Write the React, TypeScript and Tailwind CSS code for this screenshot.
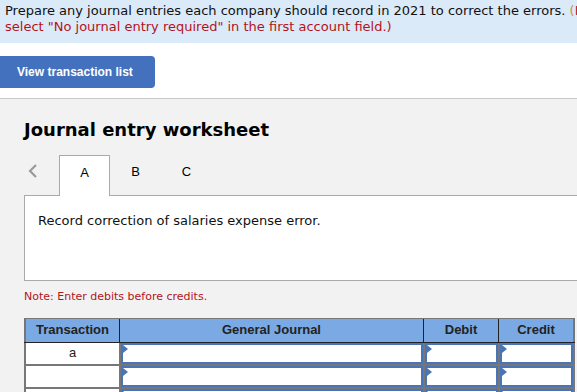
import React from "react";

function InputCell({ w }: { w: string }) {
  return (
    <div className={`relative h-full border-2 border-[#4a74b8] bg-white ${w}`}>
      <div className="absolute left-0 top-0 h-0 w-0 border-y-[4px] border-l-[5px] border-y-transparent border-l-[#4a74b8]" />
    </div>
  );
}

export default function App() {
  const verdana = { fontFamily: '"DejaVu Sans", Verdana, sans-serif' };
  const arial = { fontFamily: '"Liberation Sans", Arial, sans-serif' };
  const rows = ["a", "", ""];
  return (
    <div className="h-[392px] w-[577px] overflow-hidden bg-[#f2f2f2]">
      <div className="bg-white">
        <div
          className="h-[43px] overflow-hidden whitespace-nowrap bg-[#dbeaf8] px-[5px] pt-[3px] text-[13px] leading-[16px] text-[#111]"
          style={verdana}
        >
          <div>
            Prepare any journal entries each company should record in 2021 to correct the errors.{" "}
            <span className="text-[#e08a1e]">(</span>
            <span className="text-[#b5121b]">If no entry is required for a transaction/event,</span>
          </div>
          <div className="text-[#b5121b]">select "No journal entry required" in the first account field.)</div>
        </div>
        <div className="h-[55px] pt-[13px]">
          <div
            className="flex h-[32px] w-[155px] items-center rounded-r-[4px] bg-[#4371bd] pl-[17px] text-[12px] font-bold text-white"
            style={arial}
          >
            View transaction list
          </div>
        </div>
      </div>
      <div className="h-[1px] bg-[#c8c8c8]" />
      <div className="px-[24px]">
        <h1 className="mt-[20px] text-[18px] font-bold leading-[22px] text-black" style={verdana}>
          Journal entry worksheet
        </h1>
        <div className="mt-[14px] flex h-[40px] items-end" style={arial}>
          <div className="flex h-[40px] w-[35px] items-start pl-[3px] pt-[8px]">
            <svg width="12" height="16" viewBox="0 0 12 16">
              <path d="M9 2 L3 8 L9 14" fill="none" stroke="#9a9a9a" strokeWidth="2.2" />
            </svg>
          </div>
          <div className="relative z-10 -mb-px flex h-[41px] w-[51px] justify-center border border-b-0 border-[#aaa] bg-white pt-[7px] text-[13px] text-black">
            A
          </div>
          <div className="flex h-[40px] w-[51px] justify-center pt-[7px] text-[13px] text-black">B</div>
          <div className="flex h-[40px] w-[51px] justify-center pt-[7px] text-[13px] text-black">C</div>
        </div>
        <div className="-mr-[40px] h-[86px] border border-[#aaa] bg-white px-[13px] pt-[15px] text-[13px] text-[#111]" style={verdana}>
          Record correction of salaries expense error.
        </div>
        <div className="mt-[8px] text-[11px] text-[#b5121b]" style={verdana}>
          Note: Enter debits before credits.
        </div>
        <div className="mt-[12px] w-[551px]" style={arial}>
          <div className="flex h-[25px] border-b border-t border-b-[#222] border-t-[#777] bg-[#7ba9e3] text-[13px] font-bold text-[#222]">
            <div className="flex w-[96px] items-center justify-center border-l-2 border-r border-l-[#777] border-r-[#222]">Transaction</div>
            <div className="flex w-[304px] items-center justify-center border-r border-[#222]">General Journal</div>
            <div className="flex w-[75px] items-center justify-center border-r border-[#222]">Debit</div>
            <div className="flex w-[76px] items-center justify-center border-r-2 border-[#777]">Credit</div>
          </div>
          {rows.map((r, i) => (
            <div key={i} className="flex h-[23px] gap-[2px] bg-[#777] px-[2px] pb-[2px]">
              <div className="flex w-[93px] items-center justify-center bg-white text-[13px] text-[#222]">{r}</div>
              <InputCell w="w-[302px]" />
              <InputCell w="w-[73px]" />
              <InputCell w="w-[73px]" />
            </div>
          ))}
        </div>
      </div>
    </div>
  );
}
